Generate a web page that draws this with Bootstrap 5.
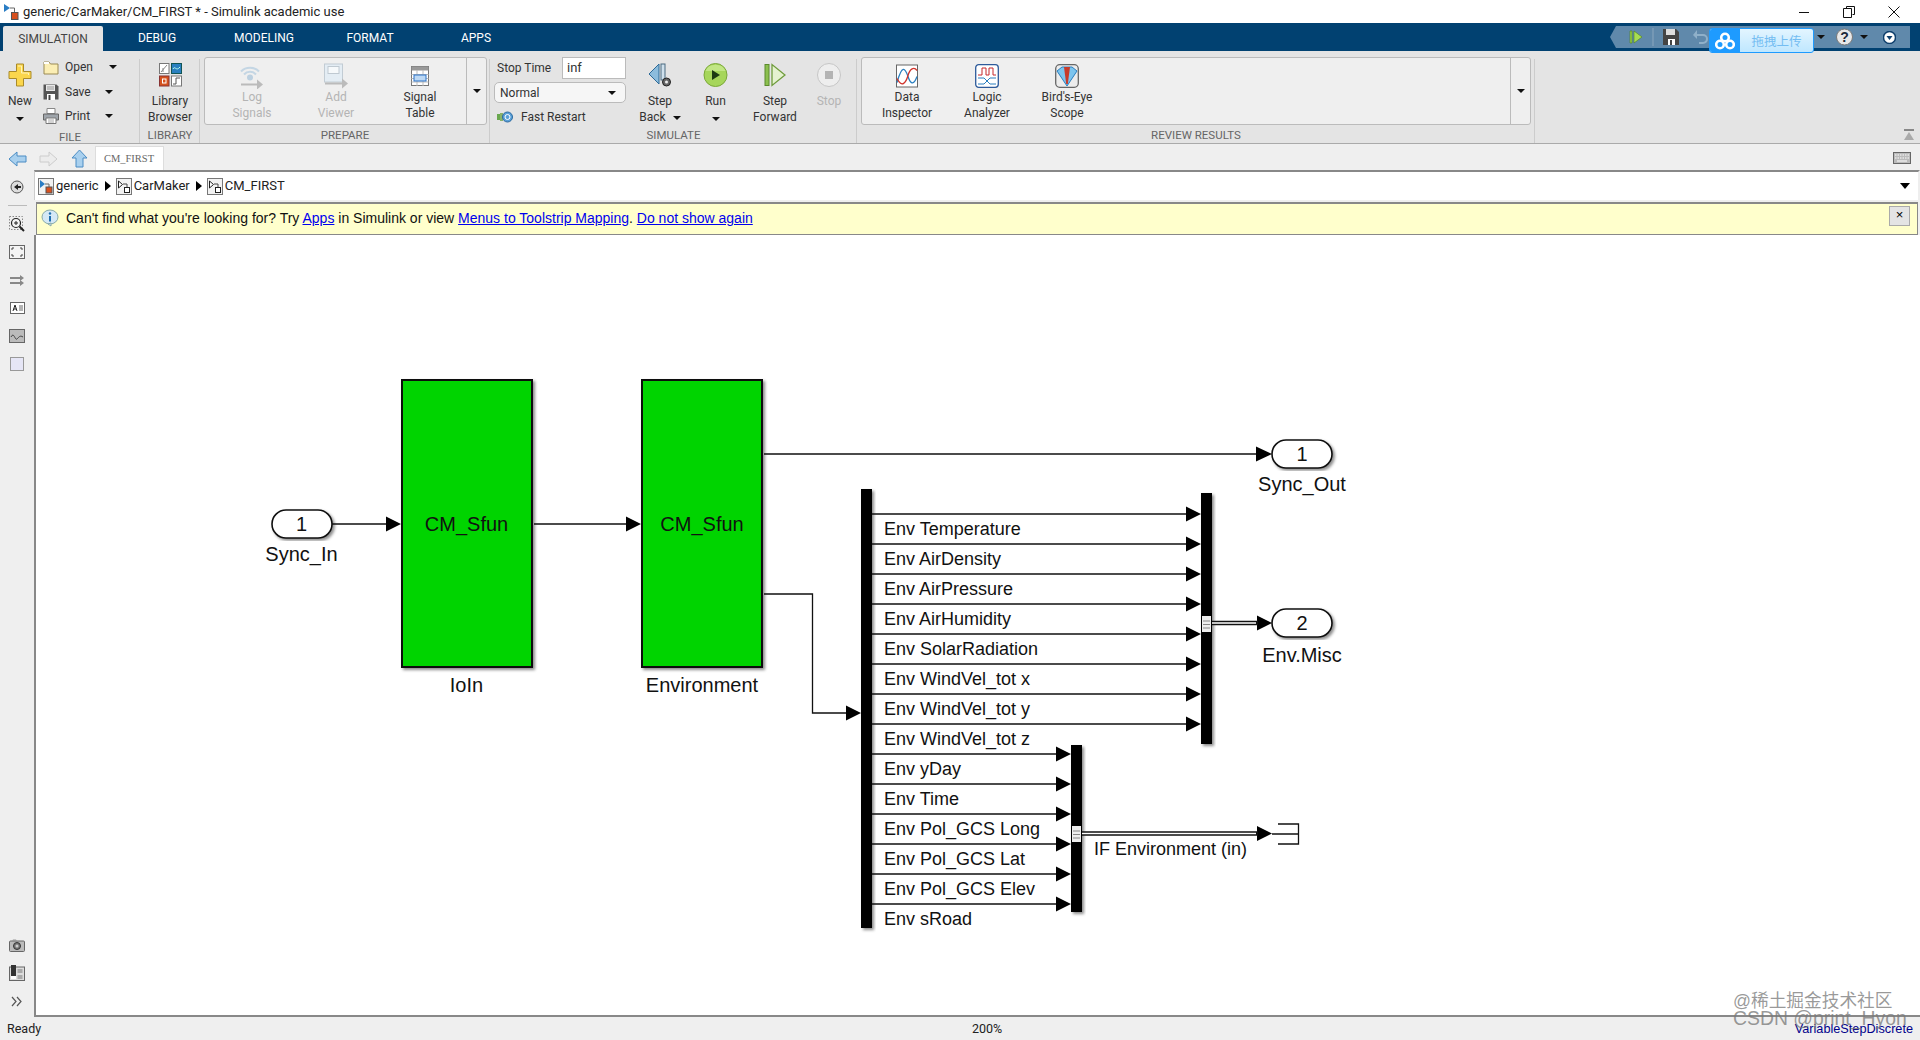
<!doctype html>
<html lang="en">
<head>
<meta charset="utf-8">
<title>generic/CarMaker/CM_FIRST</title>
<link href="https://cdn.jsdelivr.net/npm/bootstrap@5.3.0/dist/css/bootstrap.min.css" rel="stylesheet">
<style>
body{background:#efefef;font-family:Roboto,"Liberation Sans",sans-serif;font-size:12px;color:#333;line-height:16px}
.tbar{height:23px;background:#fff;color:#222;font-size:13px;padding-left:3px}
.tbar .ttl{margin-left:4px}
.winctl{margin-right:4px}
.winbtn{width:45px;height:23px}
.tabrow{height:28px;background:#014171;color:#fff;padding-left:3px;font-size:12px}
.rtab{height:25px;width:100px;margin-top:3px;background:#e4e4e4;color:#444;display:flex;align-items:center;justify-content:center;border-radius:2px 2px 0 0}
.ltab{width:106px;display:flex;align-items:center;justify-content:center;padding-top:2px}
.ltab0{width:108px}
.qat{width:300px;height:22px;margin:3px 10px 3px 0;background:#6089ab;clip-path:polygon(6px 0,100% 0,100% 100%,6px 100%,0 50%)}
.q-run{margin-left:18px}.q-sep{margin-left:8px}.q-save{margin-left:8px}.q-undo{margin-left:12px}
.q-caret{margin-right:11px}.q-help{margin-right:7px}.q-caret2{margin-right:15px}.q-menu{margin-right:14px}
.baidu{position:absolute;left:1709px;top:28px;width:105px;height:25px;border-radius:3px;border:1px solid #1e9bff;background:linear-gradient(#e3f5ff,#bfe7ff);color:#74bdf2;font-family:"Noto Sans CJK SC",sans-serif;font-size:12.5px;overflow:hidden;z-index:5}
.baidu .blogo{width:30px;background:#1e9bff}
.ribbon{height:93px;background:#e4e4e4;border-bottom:1px solid #aaa}
.rgroup{height:92px;background:linear-gradient(#ccc,#ccc) right 0 top 8px/1px 84px no-repeat;display:flex;flex-direction:column;flex:none}
.rbody{height:78px;display:flex}
.rlabel{text-align:center;font-size:11.5px;color:#666;line-height:16px}
.g-file{width:140px}.g-lib{width:60px}.g-prep{width:290px}.g-sim{width:367px}.g-rev{width:678px}
.rtool{display:flex;flex-direction:column;align-items:center;flex:none;text-align:center}
.rtool .ico{height:42px;padding-top:6px;display:block}
.tw40{width:40px}.tw51{width:51px}.tw60{width:60px}.tw68{width:68px}
.rmini{margin-left:3px;padding-top:4px}
.mrow{height:24.5px;display:flex;align-items:center}
.mrow .lbl{margin-left:6px;width:40px}
.mrow .lbl.wide{width:44px}
.tri{display:inline-block;width:0;height:0;border-style:solid;border-width:4px 4px 0;border-color:#111 transparent transparent}
.gal{background:#efefef;border:1px solid #bbb;border-radius:3px;margin:6px 0 0 4px;height:68px;display:flex;padding-left:5px;flex:none}
.g-prep .gal{width:283px}.g-rev .gal{width:670px}
.gtool{display:flex;flex-direction:column;align-items:center;flex:none;width:84px;text-align:center}
.g-rev .gtool{width:80px}
.gtool .ico{height:31px;padding-top:5px;display:block}
.galdd{width:20px;border-left:1px solid #bbb;margin-left:auto;display:flex;align-items:center;justify-content:center}
.dis{color:#b4b4b4}
.simctl{width:132px;margin:6px 4px 0 4px;flex:none}
.stoprow{height:22px;padding-left:3px}
.stopinp{width:64px;height:22px;background:#fff;border:1px solid #bbb;padding:0 4px;margin-left:auto;display:flex;align-items:center;font-size:13px}
.modesel{height:21px;margin-top:3px;border:1px solid #bbb;border-radius:5px;background:#f6f6f6;padding:0 9px 0 5px}
.fastrow{padding-left:3px;margin-top:4px;height:20px}
.rest{flex:1 1 auto;display:flex;justify-content:flex-end;align-items:flex-end;padding:0 5px 2px 0}
.navrow{height:26px;background:#efefef}
.navbtn{width:31px;display:flex;justify-content:center;align-items:center;padding-top:3px}
.nfirst{margin-left:1.5px}
.ftab{width:69px;height:24px;margin:2px 0 0 0;background:#fff;border:1px solid #ddd;border-bottom:0;font-family:"Liberation Serif",serif;font-size:10.5px;color:#666;display:flex;align-items:center;justify-content:center}
.kbd-ico{margin-right:9px}
.leftbar{width:34px;flex:none;background:#efefef;padding:3px 0 2px}
.lbtn{height:28px;display:flex;justify-content:center;align-items:center}
.lsep{height:1px;background:#bbb;margin:4px 7px 4px 8px}
.rcol{min-width:0}
.addr{height:30px;background:#fff;border-top:2px solid #888;border-left:1px solid #ccc;border-right:2px solid #eee;font-size:13px;color:#222;padding-left:3px}
.crumb{margin:0 2px 0 2px}
.ctri{width:0;height:0;border-style:solid;border-width:5px 0 5px 6px;border-color:transparent transparent transparent #000;margin:0 5px 0 4px}
.hint{height:33px;margin:2px 2px 0 2px;background:#ffc;border:1px solid #888;border-top-width:2px;font-family:"Liberation Sans",sans-serif;font-size:14px;color:#111;padding:0 0 2px 4px}
.hint a{color:#00e}
.hint .hmsg{margin-left:7px}
.hclose{width:21px;height:20px;background:#e4e4e4;border:1px solid #aaa;margin:0 7px 5px auto;font-size:13px;line-height:16px;text-align:center;color:#000}
.canvasbox{background:#fff;box-shadow:inset 2px 0 #888,inset 0 -2px #888;min-height:0}
.diagram{position:absolute;left:0;top:0;font-family:"Liberation Sans",sans-serif;fill:#111}
.statusbar{height:23px;background:#efefef;font-size:12.5px;padding:0 7px;color:#222}
.stat-mid{position:absolute;left:50%;margin-left:27px;transform:translateX(-50%)}
.stat-r{color:#00008b;font-family:"Liberation Sans",sans-serif;font-size:12.7px}
.wmark{position:absolute;left:1733px;top:993px;color:rgba(120,120,120,.75);font-family:"Liberation Sans","Noto Sans CJK SC",sans-serif;font-size:17.7px;line-height:17px;z-index:6;pointer-events:none;white-space:nowrap}
.wmark .w2{font-size:19.4px}
</style>
</head>
<body>
<div class="d-flex flex-column vh-100 overflow-hidden position-relative">

  <div class="tbar d-flex align-items-center flex-none">
    <svg width="16" height="17" viewBox="0 0 16 17"><path d="M1 1l6 4-6 4z" fill="#2a7dc4"/><path d="M7 5h4.500v5" fill="none" stroke="#666"/><rect x="8.500" y="9.500" width="6.500" height="7" fill="#d8501e" stroke="#555"/></svg>
    <span class="ttl">generic/CarMaker/CM_FIRST * - Simulink academic use</span>
    <div class="ms-auto d-flex winctl">
      <div class="winbtn d-flex align-items-center justify-content-center"><svg width="12" height="12"><path d="M1 6.500h10" stroke="#111"/></svg></div>
      <div class="winbtn d-flex align-items-center justify-content-center"><svg width="12" height="12"><path d="M3.500 2.500v-2h8v8h-2M.5 2.500h8v9h-8z" fill="none" stroke="#111"/></svg></div>
      <div class="winbtn d-flex align-items-center justify-content-center"><svg width="12" height="12"><path d="M.5.500l11 11M11.500.500l-11 11" stroke="#111"/></svg></div>
    </div>
  </div>

  <div class="tabrow d-flex position-relative">
    <div class="rtab">SIMULATION</div>
    <div class="ltab ltab0">DEBUG</div>
    <div class="ltab">MODELING</div>
    <div class="ltab">FORMAT</div>
    <div class="ltab">APPS</div>
    <div class="qat ms-auto d-flex align-items-center">
      <svg class="q-run" width="16" height="16" viewBox="0 0 16 16"><path d="M2 2h2v12H2z" fill="#9ad04a" stroke="#4f7f1c" stroke-width=".6"/><path d="M6 2l8 6-8 6z" fill="#a8dc52" stroke="#4f7f1c" stroke-width=".6"/></svg>
      <svg class="q-sep" width="2" height="18"><path d="M1 0v18" stroke="#8aa6be"/></svg>
      <svg class="q-save" width="18" height="18" viewBox="0 0 18 18"><path d="M1 1h13l3 3v13H1z" fill="#444"/><path d="M4 1h9v6H4z" fill="#ddd"/><path d="M6 11h7v6H6z" fill="#fff"/><path d="M8 12h2v5H8z" fill="#444"/></svg>
      <svg class="q-undo" width="16" height="16" viewBox="0 0 16 16"><path d="M3 6h8a3.500 3.500 0 0 1 0 8H7" fill="none" stroke="#8fb0c9" stroke-width="2"/><path d="M5 1v9L1 6z" fill="#8fb0c9"/></svg>
      <span class="tri ms-auto q-caret"></span>
      <svg class="q-help" width="17" height="18" viewBox="0 0 17 18"><circle cx="8.500" cy="9" r="8" fill="#e8e8e8" stroke="#777"/><text x="8.500" y="14" font-size="14" font-weight="700" text-anchor="middle" fill="#1c2a3a" font-family="Liberation Sans">?</text></svg>
      <span class="tri q-caret2"></span>
      <svg class="q-menu" width="13" height="13" viewBox="0 0 13 13"><circle cx="6.500" cy="6.500" r="6" fill="#fff" stroke="#0f3f6c" stroke-width="1.500"/><path d="M3.500 5h6l-3 4z" fill="#0f3f6c"/></svg>
    </div>
  </div>

  <div class="baidu d-flex">
    <div class="blogo d-flex align-items-center justify-content-center"><svg width="20" height="18" viewBox="0 0 20 18"><g fill="none" stroke="#fff" stroke-width="2.600"><circle cx="10" cy="5.500" r="3.800"/><circle cx="5" cy="12.500" r="3.800"/><circle cx="15" cy="12.500" r="3.800"/></g></svg></div>
    <div class="flex-grow-1 d-flex align-items-center justify-content-center">拖拽上传</div>
  </div>

  <div class="ribbon d-flex">
    <section class="rgroup g-file">
      <div class="rbody">
        <div class="rtool tw40">
          <svg class="ico" width="24" height="35" viewBox="0 0 24 24"><path d="M8.500 1h7v7.500H23v7h-7.500V23h-7v-7.500H1v-7h7.500z" fill="#fbd64c" stroke="#a98a2a"/><path d="M10 3h3.500v7h7v2" fill="none" stroke="#fff3b8"/></svg>
          <span>New</span><span class="tri mt-2"></span>
        </div>
        <div class="rmini">
          <div class="mrow"><svg width="16" height="15" viewBox="0 0 16 15"><path d="M1 2h5l1.500 2H15v10H1z" fill="#fbeeb4" stroke="#9a8a55"/><path d="M1 2h5v2H1z" fill="#fff"/></svg><span class="lbl wide">Open</span><span class="tri"></span></div>
          <div class="mrow"><svg width="16" height="16" viewBox="0 0 16 16"><path d="M.5.500h13l2 2v13H.5z" fill="#555"/><path d="M3 1h9v6H3z" fill="#e8e8e8"/><path d="M4 3h7M4 5h7" stroke="#999"/><path d="M4 10h8v6H4z" fill="#fff"/><path d="M5.500 11h2v5h-2z" fill="#444"/></svg><span class="lbl">Save</span><span class="tri"></span></div>
          <div class="mrow"><svg width="16" height="16" viewBox="0 0 16 16"><path d="M4 .500h8v5H4z" fill="#fff" stroke="#888"/><path d="M.5 6h15v6H.5z" fill="#9fa5ab" stroke="#666"/><path d="M3 10h10v5.500H3z" fill="#fff" stroke="#777"/><path d="M5 12h6M5 14h6" stroke="#aaa"/></svg><span class="lbl">Print</span><span class="tri"></span></div>
        </div>
      </div>
      <div class="rlabel">FILE</div>
    </section>

    <section class="rgroup g-lib">
      <div class="rbody">
        <div class="rtool tw60">
          <svg class="ico" width="23" height="35" viewBox="0 0 23 24"><rect x=".5" y=".5" width="9.500" height="10" fill="#fff" stroke="#777"/><path d="M2 9l6-7M4 9V5" stroke="#888"/><rect x="12.500" y=".5" width="10" height="10" fill="#2a80c0" stroke="#155"/><path d="M14 6c2-4 3 3 7-2" fill="none" stroke="#bfe"/><rect x=".5" y="13" width="9.500" height="10" fill="#d6521e" stroke="#833"/><rect x="3.500" y="16" width="3.500" height="4" fill="none" stroke="#fff"/><rect x="12.500" y="13" width="10" height="10" fill="#fff" stroke="#777"/><path d="M14 21h3v-6h4" fill="none" stroke="#555"/></svg>
          <span>Library</span><span>Browser</span>
        </div>
      </div>
      <div class="rlabel">LIBRARY</div>
    </section>

    <section class="rgroup g-prep">
      <div class="rbody">
        <div class="gal">
          <div class="gtool dis">
            <svg class="ico" width="26" height="31" viewBox="0 0 26 25"><path d="M2 8a12 11 0 0 1 18 0M5 11a8 8 0 0 1 12 0" fill="none" stroke="#c4d6e4" stroke-width="2"/><circle cx="11" cy="14" r="3" fill="#bcd0e0"/><path d="M2 21h18" stroke="#bbb" stroke-width="2"/><path d="M18 16l6 5-6 5z" fill="#bbb"/></svg>
            <span>Log</span><span>Signals</span>
          </div>
          <div class="gtool dis">
            <svg class="ico" width="24" height="31" viewBox="0 0 24 25"><rect x=".5" y=".5" width="18" height="18" fill="#e4edf4" stroke="#c2ccd4"/><rect x="4" y="3" width="11" height="7" fill="#f6f9fb" stroke="#bfc9d1"/><path d="M1 20h18" stroke="#bbb" stroke-width="2"/><path d="M18 15l6 5-6 5z" fill="#bbb"/></svg>
            <span>Add</span><span>Viewer</span>
          </div>
          <div class="gtool">
            <svg class="ico" width="18" height="31" viewBox="0 0 18 20"><rect x=".5" y=".5" width="17" height="19" fill="#fff" stroke="#777"/><path d="M.5.500h17v4H.5z" fill="#999"/><path d="M.5 8.500h17M.5 12.500h17M.5 16h17M6 4v16M12 4v16" stroke="#bbb"/><rect x="3" y="9" width="12" height="6" fill="#bcd8f4" stroke="#2a72c8"/></svg>
            <span>Signal</span><span>Table</span>
          </div>
          <div class="galdd"><span class="tri"></span></div>
        </div>
      </div>
      <div class="rlabel">PREPARE</div>
    </section>

    <section class="rgroup g-sim">
      <div class="rbody">
        <div class="simctl">
          <div class="stoprow d-flex align-items-center"><span>Stop Time</span><div class="stopinp">inf</div></div>
          <div class="modesel d-flex align-items-center justify-content-between"><span>Normal</span><span class="tri"></span></div>
          <div class="fastrow d-flex align-items-center"><svg width="16" height="14" viewBox="0 0 16 14"><rect x="0" y="4" width="3" height="6" fill="#6aa84f"/><rect x="3" y="3" width="3" height="8" fill="#8ab26a"/><circle cx="10.500" cy="7" r="5" fill="#5aa0d8" stroke="#2c6aa0"/><path d="M8 7a2.500 2.500 0 0 1 5 0M13 7a2.500 2.500 0 0 1-5 0" fill="none" stroke="#fff"/></svg><span class="ms-2">Fast Restart</span></div>
        </div>
        <div class="rtool tw60">
          <svg class="ico" width="24" height="35" viewBox="0 0 24 24"><path d="M11 1v20L1 11z" fill="#8cbcdc" stroke="#2d6a98"/><rect x="13" y="1" width="4" height="16" fill="#cfe0ec" stroke="#4a6a80"/><circle cx="18.500" cy="19" r="4" fill="#666" stroke="#222"/><circle cx="18.500" cy="19" r="1.500" fill="#eee"/></svg>
          <span>Step</span><span>Back <span class="tri ms-1 align-middle"></span></span>
        </div>
        <div class="rtool tw51">
          <svg class="ico" width="25" height="35" viewBox="0 0 25 24"><circle cx="12.500" cy="12" r="11.500" fill="#a6d65a" stroke="#7ba83a"/><path d="M2.500 8a10.500 9 0 0 1 20 0" fill="#d4f0a0" opacity=".6"/><path d="M9 7l8 5-8 5z" fill="#1d3b12"/></svg>
          <span>Run</span><span class="tri mt-2"></span>
        </div>
        <div class="rtool tw68">
          <svg class="ico" width="22" height="35" viewBox="0 0 22 24"><rect x="1" y="1.500" width="4" height="21" fill="#8bbf4e" stroke="#5b8a2c"/><path d="M8 1.500v21L21 12z" fill="#e4f2cf" stroke="#6f9c3c" stroke-width="1.300"/></svg>
          <span>Step</span><span>Forward</span>
        </div>
        <div class="rtool tw40 dis">
          <svg class="ico" width="24" height="35" viewBox="0 0 24 24"><circle cx="12" cy="12" r="11.500" fill="#eee" stroke="#c6c6c6"/><rect x="8" y="8" width="8" height="8" fill="#b4b4b4"/></svg>
          <span>Stop</span>
        </div>
      </div>
      <div class="rlabel">SIMULATE</div>
    </section>

    <section class="rgroup g-rev">
      <div class="rbody">
        <div class="gal">
          <div class="gtool">
            <svg class="ico" width="22" height="31" viewBox="0 0 22 23"><rect x=".5" y=".5" width="21" height="22" fill="#fff" stroke="#666"/><path d="M1 18C6 0 9 3 12 12s6 8 9 0" fill="none" stroke="#2a7fc0" stroke-width="1.300"/><path d="M1 14c5 10 9 4 11-3s6-9 9-5" fill="none" stroke="#d0342c" stroke-width="1.300"/></svg>
            <span>Data</span><span>Inspector</span>
          </div>
          <div class="gtool">
            <svg class="ico" width="24" height="31" viewBox="0 0 24 24"><rect x=".7" y=".7" width="22.600" height="22.600" rx="3" fill="#fff" stroke="#2d5a9a" stroke-width="1.300"/><path d="M3 11h4V4h4v7h3V4h4v7h3" fill="none" stroke="#c6282c"/><path d="M3 14h6l6 6h6M3 20h6l6-6h6" fill="none" stroke="#2a7fc0"/></svg>
            <span>Logic</span><span>Analyzer</span>
          </div>
          <div class="gtool">
            <svg class="ico" width="24" height="31" viewBox="0 0 24 24"><rect x=".7" y=".7" width="22.600" height="22.600" rx="4" fill="#ececec" stroke="#666" stroke-width="1.300"/><path d="M2 7l5-4h10l5 4-10 15z" fill="#7cc4ee" stroke="#2a7fc0"/><path d="M9 3h6l-2.200 17h-1.600z" fill="#c83a2a"/></svg>
            <span>Bird's-Eye</span><span>Scope</span>
          </div>
          <div class="galdd"><span class="tri"></span></div>
        </div>
      </div>
      <div class="rlabel">REVIEW RESULTS</div>
    </section>

    <div class="rest"><svg width="12" height="12" viewBox="0 0 12 12"><path d="M1 1h10" stroke="#888" stroke-width="2"/><path d="M6 3l5 8H1z" fill="#aaa"/></svg></div>
  </div>

  <div class="navrow d-flex align-items-center flex-none">
    <div class="navbtn nfirst"><svg width="19" height="16" viewBox="0 0 19 16"><path d="M9 1L1 8l8 7v-4h9V5H9z" fill="#a9d0ee" stroke="#4a8cc4"/></svg></div>
    <div class="navbtn"><svg width="19" height="16" viewBox="0 0 19 16"><path d="M10 1l8 7-8 7v-4H1V5h9z" fill="#ececec" stroke="#ccc"/></svg></div>
    <div class="navbtn"><svg width="17" height="19" viewBox="0 0 17 19"><path d="M8.500 1L16 9h-4v9H5V9H1z" fill="#a9d0ee" stroke="#4a8cc4"/></svg></div>
    <div class="ftab">CM_FIRST</div>
    <div class="ms-auto kbd-ico"><svg width="18" height="12" viewBox="0 0 18 12"><rect x=".5" y=".5" width="17" height="11" fill="#bbb" stroke="#666"/><path d="M2 3h14M2 6h14" stroke="#fff" stroke-dasharray="1.500 1"/><path d="M4 9h10" stroke="#fff"/></svg></div>
  </div>

  <div class="d-flex flex-grow-1 main-row overflow-hidden">
    <div class="leftbar d-flex flex-column">
      <div class="lbtn"><svg width="14" height="14" viewBox="0 0 14 14"><circle cx="7" cy="7" r="6" fill="#ddd" stroke="#555"/><path d="M8 4L4 7l4 3zM8 6h3v2H8z" fill="#222"/></svg></div>
      <div class="lsep"></div>
      <div class="lbtn"><svg width="16" height="16" viewBox="0 0 16 16"><rect x=".5" y=".5" width="13" height="13" fill="none" stroke="#888" stroke-dasharray="1.500 1.500"/><circle cx="7" cy="7" r="4.500" fill="#f4f4f4" stroke="#222" stroke-width="1.200"/><path d="M5 7h4M7 5v4" stroke="#222"/><path d="M10.500 10.500L15 15" stroke="#222" stroke-width="2"/></svg></div>
      <div class="lbtn"><svg width="16" height="14" viewBox="0 0 16 14"><rect x=".5" y=".5" width="15" height="13" fill="#f4f4f4" stroke="#666"/><path d="M3 5V3h2M13 5V3h-2M3 9v2h2M13 9v2h-2" fill="none" stroke="#444"/></svg></div>
      <div class="lbtn"><svg width="16" height="12" viewBox="0 0 16 12"><path d="M1 4h11M1 9h11" stroke="#222"/><path d="M11 1l4 3-4 3zM11 6l4 3-4 3z" fill="#888"/></svg></div>
      <div class="lbtn"><svg width="15" height="12" viewBox="0 0 15 12"><rect x=".5" y=".5" width="14" height="11" fill="#fff" stroke="#666"/><path d="M3 9l2-6 2 6M3.800 7h2.400" fill="none" stroke="#222"/><path d="M9 4h4M9 6h4M9 8h4" stroke="#666"/></svg></div>
      <div class="lbtn"><svg width="16" height="14" viewBox="0 0 16 14"><rect x=".5" y=".5" width="15" height="13" fill="#bbb" stroke="#666"/><path d="M2 8c3-6 4 4 6 2s3-4 6-2" fill="none" stroke="#444"/></svg></div>
      <div class="lbtn"><svg width="14" height="14"><rect x=".5" y=".5" width="13" height="13" fill="#e6e6f6" stroke="#999"/></svg></div>
      <div class="mt-auto lbtn"><svg width="16" height="13" viewBox="0 0 16 13"><rect x=".5" y="2" width="15" height="10.500" rx="1" fill="#bbb" stroke="#666"/><path d="M3 2l1-1.500h3L8 2" fill="#999"/><circle cx="8" cy="7" r="3.500" fill="#777" stroke="#333"/><circle cx="8" cy="7" r="1.500" fill="#ccc"/></svg></div>
      <div class="lbtn"><svg width="16" height="16" viewBox="0 0 16 16"><rect x=".5" y="2" width="15" height="13.500" fill="#ddd" stroke="#666"/><rect x="2" y="0" width="5" height="11" fill="#333"/><rect x="8.500" y="4" width="5" height="4" fill="#aaa"/><rect x="8.500" y="10" width="5" height="4" fill="#aaa"/><rect x="2" y="11" width="5" height="3" fill="#fff"/></svg></div>
      <div class="lbtn"><svg width="12" height="11" viewBox="0 0 12 11"><path d="M1 1l4 4.500L1 10M6 1l4 4.500L6 10" fill="none" stroke="#555" stroke-width="1.200"/></svg></div>
    </div>

    <div class="rcol flex-grow-1 d-flex flex-column">
      <div class="addr d-flex align-items-center">
        <svg width="16" height="17" viewBox="0 0 16 17"><rect x=".5" y=".5" width="15" height="16" fill="#f2f2f2" stroke="#777"/><path d="M2 2l5 4-5 4z" fill="#2a7dc4"/><path d="M7 6h4v4" fill="none" stroke="#666"/><rect x="8" y="9" width="6" height="6" fill="#d8501e" stroke="#555"/></svg>
        <span class="crumb">generic</span><span class="ctri"></span>
        <svg width="16" height="17" viewBox="0 0 16 17"><rect x=".5" y=".5" width="15" height="16" fill="#f2f2f2" stroke="#777"/><path d="M2.500 3l4 3.500-4 3.500z" fill="#fff" stroke="#222"/><path d="M7 6h4v4" fill="none" stroke="#444"/><rect x="8.500" y="9.500" width="5" height="5" fill="#fff" stroke="#222"/></svg>
        <span class="crumb">CarMaker</span><span class="ctri"></span>
        <svg width="16" height="17" viewBox="0 0 16 17"><rect x=".5" y=".5" width="15" height="16" fill="#f2f2f2" stroke="#777"/><path d="M2.500 3l4 3.500-4 3.500z" fill="#fff" stroke="#222"/><path d="M7 6h4v4" fill="none" stroke="#444"/><rect x="8.500" y="9.500" width="5" height="5" fill="#fff" stroke="#222"/></svg>
        <span class="crumb">CM_FIRST</span>
        <svg class="ms-auto me-2" width="10" height="6"><path d="M0 0h10L5 6z" fill="#000"/></svg>
      </div>
      <div class="hint d-flex align-items-center">
        <svg width="18" height="18" viewBox="0 0 18 18"><ellipse cx="9" cy="8" rx="8" ry="7" fill="#d4e8f6" stroke="#8aa"/><path d="M7 15l3 2v-3z" fill="#d4e8f6" stroke="#8aa"/><circle cx="9" cy="4.500" r="1.200" fill="#1f6fb0"/><path d="M9 7v5.500" stroke="#1f6fb0" stroke-width="2"/></svg>
        <span class="hmsg">Can't find what you're looking for? Try <a href="#">Apps</a> in Simulink or view <a href="#">Menus to Toolstrip Mapping</a>. <a href="#">Do not show again</a></span>
        <div class="hclose">×</div>
      </div>
      <div class="canvasbox flex-grow-1 position-relative">
        <svg class="diagram" width="1886" height="783" viewBox="34 235 1886 783">
          <defs><filter id="sh" x="-20%" y="-5%" width="150%" height="115%"><feDropShadow dx="2" dy="2" stdDeviation="1.500" flood-color="#000" flood-opacity=".45"/></filter></defs>

          <!-- blocks -->
          <rect x="402" y="380" width="130" height="287" fill="#00d400" stroke="#111" stroke-width="2" filter="url(#sh)"/>
          <rect x="642" y="380" width="120" height="287" fill="#00d400" stroke="#111" stroke-width="2" filter="url(#sh)"/>
          <rect x="861" y="489" width="11" height="439" fill="#000" filter="url(#sh)"/>
          <rect x="1201" y="493" width="11" height="251" fill="#000" filter="url(#sh)"/>
          <rect x="1071" y="745" width="11" height="167" fill="#000" filter="url(#sh)"/>
          <rect x="272" y="510" width="60" height="28" rx="14" fill="#fff" stroke="#111" stroke-width="1.600" filter="url(#sh)"/>
          <rect x="1272" y="440" width="60" height="28" rx="14" fill="#fff" stroke="#111" stroke-width="1.600" filter="url(#sh)"/>
          <rect x="1272" y="609" width="60" height="28" rx="14" fill="#fff" stroke="#111" stroke-width="1.600" filter="url(#sh)"/>

          <!-- wires -->
          <path fill="none" stroke="#111" stroke-width="1.300" d="M332 524H388M534 524H628M764 454H1258M764 594H812.500V713H848
            M872 514H1188M872 544H1188M872 574H1188M872 604H1188M872 634H1188M872 664H1188M872 694H1188M872 724H1188
            M872 754H1058M872 784H1058M872 814H1058M872 844H1058M872 874H1058M872 904H1058"/>
          <path fill="#000" d="M386 516.500l15 7.500-15 7.500zM626 516.500l15 7.500-15 7.500zM1256 446.500l16 7.500-16 7.500zM846 705.500l15 7.500-15 7.500z
            M1186 506.500l15 7.500-15 7.500zM1186 536.500l15 7.500-15 7.500zM1186 566.500l15 7.500-15 7.500zM1186 596.500l15 7.500-15 7.500zM1186 626.500l15 7.500-15 7.500zM1186 656.500l15 7.500-15 7.500zM1186 686.500l15 7.500-15 7.500zM1186 716.500l15 7.500-15 7.500z
            M1056 746.500l15 7.500-15 7.500zM1056 776.500l15 7.500-15 7.500zM1056 806.500l15 7.500-15 7.500zM1056 836.500l15 7.500-15 7.500zM1056 866.500l15 7.500-15 7.500zM1056 896.500l15 7.500-15 7.500z
            M1257 615.500l15 7.500-15 7.500zM1257 826l15 7.500-15 7.500z"/>

          <!-- bus lines -->
          <path fill="none" stroke="#111" stroke-width="4.500" d="M1212 623H1258M1082 833.500H1258"/>
          <path fill="none" stroke="#fff" stroke-width="1.500" d="M1212 623H1256M1082 833.500H1256"/>
          <rect x="1202" y="616" width="9" height="16" fill="#eee"/>
          <path d="M1203 621h7M1203 624.500h7M1203 628h7" stroke="#888" stroke-width="1.200"/>
          <rect x="1072" y="826" width="9" height="16" fill="#eee"/>
          <path d="M1073 831h7M1073 834.500h7M1073 838h7" stroke="#888" stroke-width="1.200"/>

          <!-- goto block -->
          <path fill="none" stroke="#111" stroke-width="1.300" d="M1278 824H1298.500V844H1278M1272 834H1298.500"/>

          <!-- labels -->
          <g text-anchor="middle" font-size="20">
            <text x="466.500" y="530.500">CM_Sfun</text>
            <text x="702" y="530.500">CM_Sfun</text>
            <text x="466.500" y="691.500">IoIn</text>
            <text x="702" y="691.500">Environment</text>
            <text x="301.500" y="530.500">1</text>
            <text x="1302" y="460.500">1</text>
            <text x="1302" y="629.500">2</text>
            <text x="301.500" y="561">Sync_In</text>
            <text x="1302" y="491">Sync_Out</text>
            <text x="1302" y="661.500">Env.Misc</text>
          </g>
          <g font-size="18">
            <text x="884" y="534.500">Env Temperature</text>
            <text x="884" y="564.500">Env AirDensity</text>
            <text x="884" y="594.500">Env AirPressure</text>
            <text x="884" y="624.500">Env AirHumidity</text>
            <text x="884" y="654.500">Env SolarRadiation</text>
            <text x="884" y="684.500">Env WindVel_tot x</text>
            <text x="884" y="714.500">Env WindVel_tot y</text>
            <text x="884" y="744.500">Env WindVel_tot z</text>
            <text x="884" y="774.500">Env yDay</text>
            <text x="884" y="804.500">Env Time</text>
            <text x="884" y="834.500">Env Pol_GCS Long</text>
            <text x="884" y="864.500">Env Pol_GCS Lat</text>
            <text x="884" y="894.500">Env Pol_GCS Elev</text>
            <text x="884" y="924.500">Env sRoad</text>
          </g>
          <text x="1094" y="854.500" font-size="18">IF Environment (in)</text>
        </svg>
      </div>
    </div>
  </div>

  <div class="statusbar d-flex align-items-center position-relative flex-none">
    <span>Ready</span>
    <span class="stat-mid">200%</span>
    <span class="stat-r ms-auto">VariableStepDiscrete</span>
  </div>

  <div class="wmark">@稀土掘金技术社区<br><span class="w2">CSDN @print_Hyon</span></div>
</div>
<script src="https://cdn.jsdelivr.net/npm/bootstrap@5.3.0/dist/js/bootstrap.bundle.min.js"></script>
</body>
</html>
